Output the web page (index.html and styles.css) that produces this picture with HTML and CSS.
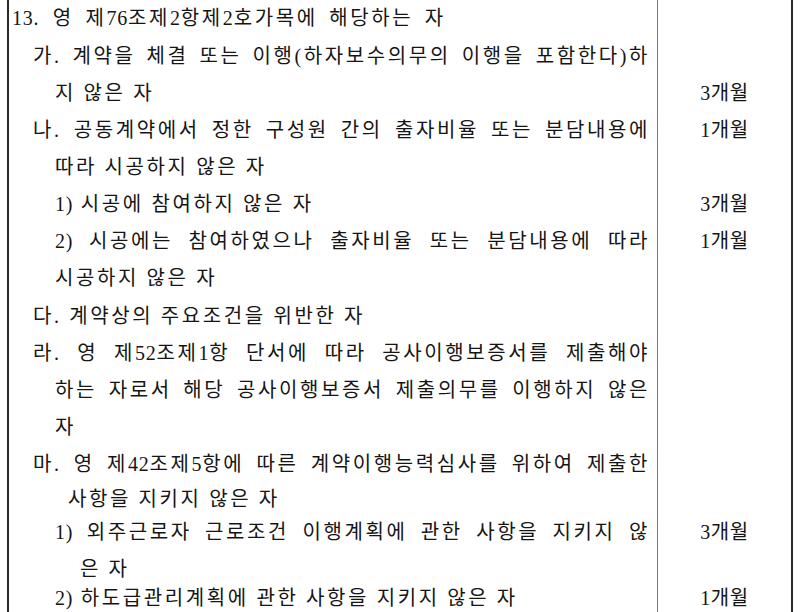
FILE: index.html
```html
<!DOCTYPE html>
<html lang="ko">
<head>
<meta charset="utf-8">
<title>제재기간</title>
<link rel="stylesheet" href="styles.css">
</head>
<body>
<div class="table">
  <div class="row"><div class="txt l0 head"><span class="n">13</span>. 영 제<span class="n">76</span>조제<span class="n">2</span>항제<span class="n">2</span>호가목에 해당하는 자</div><div class="per"></div></div>
  <div class="row"><div class="txt l1 j">가. 계약을 체결 또는 이행(하자보수의무의 이행을 포함한다)하</div><div class="per"></div></div>
  <div class="row"><div class="txt l2">지 않은 자</div><div class="per">3개월</div></div>
  <div class="row"><div class="txt l1 j">나. 공동계약에서 정한 구성원 간의 출자비율 또는 분담내용에</div><div class="per">1개월</div></div>
  <div class="row"><div class="txt l2">따라 시공하지 않은 자</div><div class="per"></div></div>
  <div class="row"><div class="txt l2"><span class="n">1)</span> 시공에 참여하지 않은 자</div><div class="per">3개월</div></div>
  <div class="row"><div class="txt l2 j"><span class="n">2)</span> 시공에는 참여하였으나 출자비율 또는 분담내용에 따라</div><div class="per">1개월</div></div>
  <div class="row"><div class="txt l2">시공하지 않은 자</div><div class="per"></div></div>
  <div class="row"><div class="txt l1">다. 계약상의 주요조건을 위반한 자</div><div class="per"></div></div>
  <div class="row"><div class="txt l1 j">라. 영 제<span class="n">52</span>조제<span class="n">1</span>항 단서에 따라 공사이행보증서를 제출해야</div><div class="per"></div></div>
  <div class="row"><div class="txt l2 j">하는 자로서 해당 공사이행보증서 제출의무를 이행하지 않은</div><div class="per"></div></div>
  <div class="row"><div class="txt l2">자</div><div class="per"></div></div>
  <div class="row"><div class="txt l1 j">마. 영 제<span class="n">42</span>조제<span class="n">5</span>항에 따른 계약이행능력심사를 위하여 제출한</div><div class="per"></div></div>
  <div class="row r14"><div class="txt l3">사항을 지키지 않은 자</div><div class="per"></div></div>
  <div class="row r15"><div class="txt l2 j"><span class="n">1)</span> 외주근로자 근로조건 이행계획에 관한 사항을 지키지 않</div><div class="per">3개월</div></div>
  <div class="row r16"><div class="txt l4">은 자</div><div class="per"></div></div>
  <div class="row r17"><div class="txt l2"><span class="n">2)</span> 하도급관리계획에 관한 사항을 지키지 않은 자</div><div class="per">1개월</div></div>
  <div class="row fill"><div class="txt"></div><div class="per"></div></div>
</div>
</body>
</html>
```

FILE: styles.css
```css
html, body {
  margin: 0;
  padding: 0;
  background: #fff;
}
body {
  font-family: "Liberation Serif", "Noto Sans CJK KR", serif;
  font-size: 20px;
  color: #151515;
  overflow: hidden;
  height: 612px;
}
.table {
  margin: 0.4px 0 0 7px;
  width: 782px;
  border-left: 2px solid #2a2a2a;
  border-right: 2px solid #2a2a2a;
  height: 640px;
  display: flex;
  flex-direction: column;
}
.row {
  display: flex;
  height: 37.17px;
  line-height: 37.17px;
  flex: none;
}
.txt {
  width: 648px;
  flex: none;
  box-sizing: border-box;
  padding-right: 7px;
  letter-spacing: 2.6px;
  word-spacing: 0;
  white-space: nowrap;
}
.txt.j {
  text-align: justify;
  text-align-last: justify;
  white-space: normal;
}
.txt.head {
  word-spacing: 4px;
}
.n {
  letter-spacing: 0.8px;
}
.l0 { padding-left: 3px; }
.l1 { padding-left: 24px; }
.l2 { padding-left: 46px; }
.l3 { padding-left: 59px; }
.l4 { padding-left: 71px; }
.per {
  flex: 1;
  border-left: 1px solid #7a7a7a;
  display: flex;
  align-items: center;
  justify-content: center;
  letter-spacing: 0.5px;
}
.r14 { height: 32.8px; line-height: 32.8px; }
.r15 { height: 33.2px; line-height: 33.2px; }
.r16 { height: 40.8px; line-height: 40.8px; }
.r17 { height: 17.2px; line-height: 17.2px; }
.fill { flex: 1; }
```
